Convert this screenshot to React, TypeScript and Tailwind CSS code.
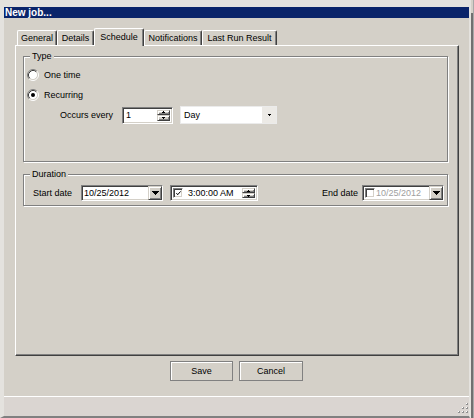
import React from 'react';

const sunken =
  'border border-t-[#808080] border-l-[#808080] border-r-white border-b-white shadow-[inset_1px_1px_0_#404040,inset_-1px_-1px_0_#d4d0c8]';
const raised =
  'bg-[#d4d0c8] border border-t-[#d4d0c8] border-l-[#d4d0c8] border-r-[#404040] border-b-[#404040] shadow-[inset_1px_1px_0_white,inset_-1px_-1px_0_#808080]';

function DownArrow() {
  return (
    <svg width="7" height="4" viewBox="0 0 7 4" shapeRendering="crispEdges">
      <path d="M0 0h7v1h-1v1h-1v1h-1v1h-1v-1h-1v-1h-1v-1h-1z" fill="#000" />
    </svg>
  );
}

function SmallUp() {
  return (
    <svg width="3" height="2" viewBox="0 0 3 2" shapeRendering="crispEdges">
      <path d="M1 0h1v1h1v1h-3v-1h1z" fill="#000" />
    </svg>
  );
}

function SmallDown() {
  return (
    <svg width="3" height="2" viewBox="0 0 3 2" shapeRendering="crispEdges">
      <path d="M0 0h3v1h-1v1h-1v-1h-1z" fill="#000" />
    </svg>
  );
}

function Spinner() {
  return (
    <div className="flex flex-col w-[13px] h-full">
      <div className={`flex-1 flex items-center justify-center ${raised}`}>
        <SmallUp />
      </div>
      <div className={`flex-1 flex items-center justify-center ${raised}`}>
        <SmallDown />
      </div>
    </div>
  );
}

function Radio({ checked }: { checked?: boolean }) {
  return (
    <svg width="12" height="12" viewBox="0 0 12 12">
      <circle cx="6" cy="6" r="4.5" fill="white" />
      <path d="M2.11 9.89 A5.5 5.5 0 0 1 9.89 2.11" stroke="#808080" fill="none" />
      <path d="M9.89 2.11 A5.5 5.5 0 0 1 2.11 9.89" stroke="white" fill="none" />
      <path d="M2.82 9.18 A4.5 4.5 0 0 1 9.18 2.82" stroke="#404040" fill="none" />
      <path d="M9.18 2.82 A4.5 4.5 0 0 1 2.82 9.18" stroke="#d4d0c8" fill="none" />
      {checked && <circle cx="6" cy="6" r="2" fill="black" />}
    </svg>
  );
}

function CheckBox({ checked }: { checked?: boolean }) {
  return (
    <div className={`w-[10px] h-[10px] bg-white flex items-center justify-center ${sunken}`}>
      {checked && (
        <svg width="5" height="5" viewBox="0 0 6 6">
          <path d="M0.5 2.5 L2 4.5 L5.5 0.5" stroke="black" strokeWidth="1.2" fill="none" />
        </svg>
      )}
    </div>
  );
}

function DatePicker({ disabled }: { disabled?: boolean }) {
  return (
    <div className={`w-[82px] h-[16px] bg-white flex items-center ${sunken}`}>
      {disabled && (
        <div className="ml-[2px]">
          <CheckBox />
        </div>
      )}
      <span className={disabled ? 'flex-1 pl-px text-[#a0a0a0]' : 'flex-1 pl-[2px]'}>10/25/2012</span>
      <div className={`w-[14px] h-full flex items-center justify-center ${raised}`}>
        <DownArrow />
      </div>
    </div>
  );
}

function Tab({ label, width, selected }: { label: string; width: string; selected?: boolean }) {
  return selected ? (
    <div
      className={`${width} h-[18px] -mb-px relative z-10 bg-[#d4d0c8] flex items-center justify-center rounded-t-[2px] border-t border-l border-r border-t-white border-l-white border-r-[#404040] shadow-[inset_-1px_0_0_#808080]`}
    >
      {label}
    </div>
  ) : (
    <div
      className={`${width} h-[15px] flex items-center justify-center rounded-t-[2px] border-t border-l border-r border-t-white border-l-white border-r-[#404040] shadow-[inset_-1px_0_0_#808080]`}
    >
      {label}
    </div>
  );
}

export default function App() {
  return (
    <div className="w-[474px] h-[418px] flex bg-[#d4d0c8] overflow-hidden font-['Liberation_Sans',Arial,sans-serif] text-[9px] leading-[11px] text-black">
      <div className="w-[470px] h-full flex flex-col border-t-[7px] border-l-[4px] border-r border-t-[#e4e2de] border-l-[#e4e2de] border-r-[#e4e2de] border-b-2 border-b-[#808080]">
        {/* title bar */}
        <div className="h-[11px] bg-[#0a246a] text-white font-bold text-[10px] leading-[11px] pl-px">New job...</div>

        <div className="pt-[10px] pl-[11px]">
          <div className="flex items-end h-[17px] pl-[2px]">
            <Tab label="General" width="w-[40px]" />
            <Tab label="Details" width="w-[37px]" />
            <Tab label="Schedule" width="w-[50px]" selected />
            <Tab label="Notifications" width="w-[58px]" />
            <Tab label="Last Run Result" width="w-[75px]" />
          </div>

          <div className="w-[444px] h-[311px] border border-t-white border-l-white border-r-[#404040] border-b-[#404040] shadow-[inset_-1px_-1px_0_#808080] pt-[5px] pl-[7px]">
            <fieldset className="w-[425px] h-[111px] border border-[#808080] shadow-[1px_1px_0_white,inset_1px_1px_0_white]">
              <legend className="ml-[6px] px-[2px] bg-[#d4d0c8] leading-[11px]">Type</legend>
              <div className="pt-[7px] pl-[3px]">
                <div className="flex items-center h-[12px] gap-[5px]">
                  <Radio />
                  <span>One time</span>
                </div>
                <div className="flex items-center h-[12px] gap-[5px] mt-[8px]">
                  <Radio checked />
                  <span>Recurring</span>
                </div>
                <div className="flex items-center h-[18px] mt-[5px] pl-[33px]">
                  <span className="w-[62px]">Occurs every</span>
                  <div className={`w-[51px] h-[17px] bg-white flex items-center pr-[2px] py-[2px] ${sunken}`}>
                    <span className="flex-1 pl-[3px]">1</span>
                    <Spinner />
                  </div>
                  <div className="ml-[7px] w-[97px] h-[18px] bg-white border border-[#ebebeb] flex items-center">
                    <span className="flex-1 pl-[3px]">Day</span>
                    <div className="w-[15px] h-full bg-[#eceae6] border-l border-white flex items-center justify-center">
                      <SmallDown />
                    </div>
                  </div>
                </div>
              </div>
            </fieldset>

            <fieldset className="mt-[7px] w-[425px] h-[37px] border border-[#808080] shadow-[1px_1px_0_white,inset_1px_1px_0_white]">
              <legend className="ml-[6px] px-[2px] bg-[#d4d0c8] leading-[11px]">Duration</legend>
              <div className="flex items-center h-[16px] mt-[5px] pl-[9px] pr-[3px]">
                <span className="w-[48px]">Start date</span>
                <DatePicker />
                <div className={`ml-[7px] w-[88px] h-[16px] bg-white flex items-center py-[2px] pr-[2px] ${sunken}`}>
                  <div className="ml-[2px]">
                    <CheckBox checked />
                  </div>
                  <span className="flex-1 pl-[5px]">3:00:00 AM</span>
                  <Spinner />
                </div>
                <span className="ml-auto mr-[4px]">End date</span>
                <DatePicker disabled />
              </div>
            </fieldset>
          </div>
        </div>

        <div className="flex justify-center gap-[6px] mt-[5px]">
          <button className="w-[63px] h-[20px] border border-[#808080] shadow-[inset_1px_1px_0_white] flex items-center justify-center">
            Save
          </button>
          <button className="w-[64px] h-[20px] border border-[#808080] shadow-[inset_1px_1px_0_white] flex items-center justify-center">
            Cancel
          </button>
        </div>

        <div className="mt-[15px] h-[20px] border-t border-white bg-[#dad5d1] flex justify-end pt-[5px] pr-px">
          <svg width="10" height="11" viewBox="0 0 10 11" shapeRendering="crispEdges">
            <rect x="8" y="1" width="2" height="2" fill="#909090" />
            <rect x="4" y="5" width="2" height="2" fill="#909090" />
            <rect x="8" y="5" width="2" height="2" fill="#909090" />
            <rect x="0" y="9" width="2" height="2" fill="#909090" />
            <rect x="4" y="9" width="2" height="2" fill="#909090" />
            <rect x="8" y="9" width="2" height="2" fill="#909090" />
            <rect x="8" y="1" width="1" height="1" fill="white" />
            <rect x="4" y="5" width="1" height="1" fill="white" />
            <rect x="8" y="5" width="1" height="1" fill="white" />
            <rect x="0" y="9" width="1" height="1" fill="white" />
            <rect x="4" y="9" width="1" height="1" fill="white" />
            <rect x="8" y="9" width="1" height="1" fill="white" />
          </svg>
        </div>
      </div>

      {/* edge of the window behind */}
      <div className="w-[4px] h-full flex">
        <div className="w-px bg-[#e4e2de]" />
        <div className="w-[2px] mt-[13px] bg-[#707070]" />
        <div className="w-px bg-[#a8a8a8]" />
      </div>
    </div>
  );
}
